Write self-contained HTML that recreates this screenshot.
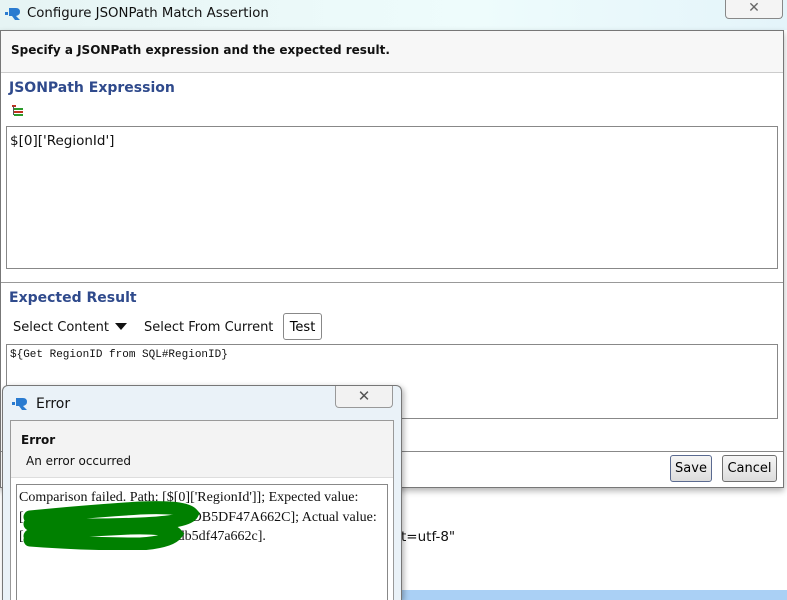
<!DOCTYPE html>
<html><head><meta charset="utf-8"><style>
*{margin:0;padding:0;box-sizing:border-box}
html,body{width:787px;height:600px;overflow:hidden}
body{background:#fff;position:relative;font-family:"DejaVu Sans","Liberation Sans",sans-serif;}
.a{position:absolute}
.h{color:#2f4a8c;font-weight:bold;font-size:14px;font-family:"DejaVu Sans",sans-serif}
.btn{border:1px solid #707070;border-radius:3px;background:linear-gradient(#f6f6f6,#dcdcdc);font-size:13px;text-align:center;line-height:25px}
.sp{display:inline-block}
</style></head><body>
<div class="a" style="left:0;top:0;width:787px;height:30px;background:linear-gradient(90deg,#e6f4f4,#eefcfc 60%,#e4f4fa)"></div>
<svg class="a" style="left:5px;top:6px" width="16" height="16"><path d="M4 2 L11 2 Q15 2 15 6 Q15 9 11 10 L15 14 L10 14 L7 10 L4 10 Z" fill="#2a7bd0"/><rect x="0" y="6" width="3" height="3" fill="#2a7bd0"/></svg>
<div class="a" style="left:27px;top:6px;color:#111;font-size:13.3px">Configure JSONPath Match Assertion</div>
<div class="a" style="left:725px;top:0;width:58px;height:19px;border:1px solid #888;border-top:none;border-radius:0 0 4px 4px;background:#f4f4f4;text-align:center;font-size:14px;color:#666;line-height:17px">✕</div>
<div class="a" style="left:0;top:30px;width:784px;height:458px;border:1px solid #777;background:#fff;box-shadow:0 3px 6px rgba(0,0,0,.3)"></div>
<div class="a" style="left:1px;top:31px;width:782px;height:42px;background:#f7f7f7;border-bottom:1px solid #ccc"></div>
<div class="a" style="left:11px;top:43px;font-size:12px;font-weight:bold;color:#111">Specify a JSONPath expression and the expected result.</div>
<div class="a h" style="left:9px;top:80px">JSONPath Expression</div>
<svg class="a" style="left:11px;top:104px" width="14" height="14"><rect x="1" y="1" width="4" height="2" fill="#c03020"/><rect x="3" y="4" width="9" height="2" fill="#2a9a2a"/><rect x="3" y="7" width="9" height="2" fill="#c03020"/><rect x="3" y="10" width="9" height="2" fill="#2a9a2a"/><rect x="2" y="2" width="1" height="9" fill="#555"/></svg>
<div class="a" style="left:6px;top:126px;width:772px;height:143px;border:1px solid #888"></div>
<div class="a" style="left:10px;top:133px;font-size:13.5px;color:#111">$[0]['RegionId']</div>
<div class="a" style="left:1px;top:282px;width:782px;height:1px;background:#999"></div>
<div class="a h" style="left:9px;top:290px">Expected Result</div>
<div class="a" style="left:13px;top:320px;font-size:13px;color:#111">Select Content</div>
<div class="a" style="left:115px;top:323px;width:0;height:0;border-left:6px solid transparent;border-right:6px solid transparent;border-top:7px solid #111"></div>
<div class="a" style="left:144px;top:320px;font-size:13px;color:#111">Select From Current</div>
<div class="a" style="left:283px;top:313px;width:39px;height:27px;border:1px solid #888;border-radius:3px;font-size:13px;text-align:center;line-height:27px">Test</div>
<div class="a" style="left:6px;top:344px;width:772px;height:75px;border:1px solid #888"></div>
<div class="a" style="left:10px;top:349px;font-size:11px;font-family:'Liberation Mono',monospace;color:#111">${Get RegionID from SQL#RegionID}</div>
<div class="a" style="left:1px;top:451px;width:782px;height:1px;background:#888"></div>
<div class="a btn" style="left:670px;top:455px;width:42px;height:27px;border-color:#5a6a90">Save</div>
<div class="a btn" style="left:722px;top:455px;width:55px;height:27px">Cancel</div>
<div class="a" style="left:401px;top:529px;font-size:13.5px;color:#111">t=utf-8"</div>
<div class="a" style="left:401px;top:590px;width:386px;height:10px;background:#aad0f5"></div>
<div class="a" style="left:2px;top:385px;width:400px;height:215px;border:1px solid #777;border-bottom:none;border-radius:6px 6px 0 0;background:#eaf2f8;box-shadow:2px 2px 6px rgba(0,0,0,.3)"></div>
<svg class="a" style="left:12px;top:396px" width="16" height="16"><path d="M4 2 L11 2 Q15 2 15 6 Q15 9 11 10 L15 14 L10 14 L7 10 L4 10 Z" fill="#2a7bd0"/><rect x="0" y="6" width="3" height="3" fill="#2a7bd0"/></svg>
<div class="a" style="left:36px;top:396px;font-size:14px;color:#111">Error</div>
<div class="a" style="left:335px;top:386px;width:58px;height:22px;border:1px solid #999;border-top:none;border-radius:0 0 4px 4px;background:#f2f2f2;text-align:center;font-size:15px;color:#555;line-height:20px">✕</div>
<div class="a" style="left:10px;top:420px;width:384px;height:180px;border:1px solid #999;border-bottom:none;background:#fff"></div>
<div class="a" style="left:11px;top:421px;width:382px;height:57px;background:#f3f3f3;border-bottom:1px solid #ddd"></div>
<div class="a" style="left:21px;top:433px;font-size:12px;font-weight:bold;color:#111">Error</div>
<div class="a" style="left:26px;top:454px;font-size:12px;color:#111">An error occurred</div>
<div class="a" style="left:16px;top:484px;width:372px;height:120px;border:1px solid #888"></div>
<div class="a" style="left:19px;top:488px;font-family:'Liberation Serif',serif;font-size:14px;line-height:19.5px;color:#111;width:370px">Comparison failed. Path: [$[0]['RegionId']]; Expected value:<br>[<span class="sp" style="width:168px"></span>DB5DF47A662C]; Actual value:<br>[<span class="sp" style="width:154px"></span>db5df47a662c].</div>
<svg class="a" style="left:20px;top:500px" width="190" height="50"><path d="M10 17 Q60 12 120 8 Q165 6 172 14 Q168 22 120 24 Q70 26 10 24 M10 36 Q60 30 110 28 Q150 27 156 34 Q150 42 120 44 Q60 44 10 40" stroke="#008000" stroke-width="13" fill="none" stroke-linecap="round"/></svg>
</body></html>
